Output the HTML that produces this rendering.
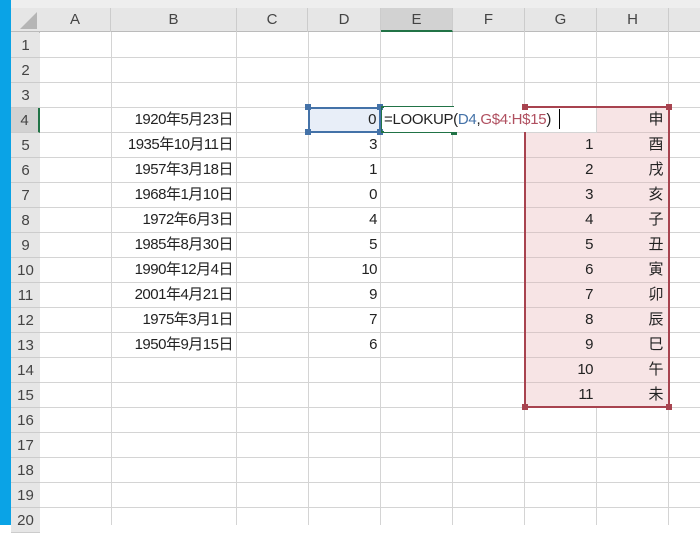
<!DOCTYPE html>
<html><head><meta charset="utf-8"><style>
*{margin:0;padding:0;box-sizing:border-box}
body{width:700px;height:525px;overflow:hidden;background:#fff;position:relative;font-family:"Liberation Sans","Noto Sans CJK JP",sans-serif;color:#222}
.a{position:absolute}
.vl{position:absolute;top:32px;bottom:0;width:1px;background:#d4d4d4}
.hl{position:absolute;left:40px;right:0;height:1px;background:#d4d4d4}
.ch{position:absolute;top:8px;height:24px;font-size:15px;color:#444;text-align:center;line-height:24px;border-right:1px solid #ccc}
.rh{position:absolute;left:11px;width:29px;height:25px;font-size:15px;color:#444;text-align:center;line-height:25px;border-bottom:1px solid #ccc;background:#e6e6e6}
.c{position:absolute;height:25px;line-height:25px;font-size:15px;text-align:right;padding-right:4px;white-space:nowrap;letter-spacing:-0.5px}
.h{position:absolute;width:6px;height:6px}
</style></head><body>
<div class="a" style="left:0;top:0;width:11px;height:525px;background:#0aa3e6"></div>
<div class="a" style="left:11px;top:0;width:689px;height:8px;background:#eeeeee"></div>
<div class="a" style="left:11px;top:8px;width:689px;height:24px;background:#e6e6e6;border-bottom:1px solid #bbb"></div>
<div class="a" style="left:11px;top:32px;width:29px;height:493px;background:#e6e6e6;border-right:1px solid #bbb"></div>
<svg class="a" style="left:18px;top:12px" width="20" height="18"><polygon points="19,0 19,17 2,17" fill="#b5b5b5"/></svg>
<div class="ch" style="left:40px;width:71px">A</div>
<div class="ch" style="left:111px;width:126px">B</div>
<div class="ch" style="left:237px;width:71px">C</div>
<div class="ch" style="left:308px;width:73px">D</div>
<div class="ch" style="left:381px;width:72px;background:#d2d2d2;border-bottom:2px solid #217346;line-height:23px">E</div>
<div class="ch" style="left:453px;width:72px">F</div>
<div class="ch" style="left:525px;width:72px">G</div>
<div class="ch" style="left:597px;width:72px">H</div>
<div class="vl" style="left:111px"></div><div class="vl" style="left:236px"></div><div class="vl" style="left:308px"></div><div class="vl" style="left:380px"></div><div class="vl" style="left:452px"></div><div class="vl" style="left:524px"></div><div class="vl" style="left:596px"></div><div class="vl" style="left:668px"></div>
<div class="hl" style="top:57px"></div><div class="hl" style="top:82px"></div><div class="hl" style="top:107px"></div><div class="hl" style="top:132px"></div><div class="hl" style="top:157px"></div><div class="hl" style="top:182px"></div><div class="hl" style="top:207px"></div><div class="hl" style="top:232px"></div><div class="hl" style="top:257px"></div><div class="hl" style="top:282px"></div><div class="hl" style="top:307px"></div><div class="hl" style="top:332px"></div><div class="hl" style="top:357px"></div><div class="hl" style="top:382px"></div><div class="hl" style="top:407px"></div><div class="hl" style="top:432px"></div><div class="hl" style="top:457px"></div><div class="hl" style="top:482px"></div><div class="hl" style="top:507px"></div>
<div class="rh" style="top:33px">1</div><div class="rh" style="top:58px">2</div><div class="rh" style="top:83px">3</div>
<div class="rh" style="top:108px;background:#d2d2d2;border-right:2px solid #217346">4</div>
<div class="rh" style="top:133px">5</div><div class="rh" style="top:158px">6</div><div class="rh" style="top:183px">7</div><div class="rh" style="top:208px">8</div><div class="rh" style="top:233px">9</div><div class="rh" style="top:258px">10</div><div class="rh" style="top:283px">11</div><div class="rh" style="top:308px">12</div><div class="rh" style="top:333px">13</div><div class="rh" style="top:358px">14</div><div class="rh" style="top:383px">15</div><div class="rh" style="top:408px">16</div><div class="rh" style="top:433px">17</div><div class="rh" style="top:458px">18</div><div class="rh" style="top:483px">19</div><div class="rh" style="top:508px">20</div>
<!-- pink range -->
<div class="a" style="left:525px;top:133px;width:72px;height:274px;background:#f7e4e5"></div>
<div class="a" style="left:597px;top:108px;width:72px;height:299px;background:#f7e4e5"></div>
<div class="hl" style="left:525px;right:31px;top:157px;background:#d9c8c9"></div>
<div class="hl" style="left:525px;right:31px;top:182px;background:#d9c8c9"></div><div class="hl" style="left:525px;right:31px;top:207px;background:#d9c8c9"></div><div class="hl" style="left:525px;right:31px;top:232px;background:#d9c8c9"></div><div class="hl" style="left:525px;right:31px;top:257px;background:#d9c8c9"></div><div class="hl" style="left:525px;right:31px;top:282px;background:#d9c8c9"></div><div class="hl" style="left:525px;right:31px;top:307px;background:#d9c8c9"></div><div class="hl" style="left:525px;right:31px;top:332px;background:#d9c8c9"></div><div class="hl" style="left:525px;right:31px;top:357px;background:#d9c8c9"></div><div class="hl" style="left:525px;right:31px;top:382px;background:#d9c8c9"></div><div class="hl" style="left:597px;right:31px;top:132px;background:#d9c8c9"></div>
<div class="a" style="left:453px;top:108px;width:143px;height:24px;background:#fff"></div>
<!-- B dates -->
<div class="c" style="left:111px;width:126px;top:107px">1920年5月23日</div>
<div class="c" style="left:111px;width:126px;top:132px">1935年10月11日</div>
<div class="c" style="left:111px;width:126px;top:157px">1957年3月18日</div>
<div class="c" style="left:111px;width:126px;top:182px">1968年1月10日</div>
<div class="c" style="left:111px;width:126px;top:207px">1972年6月3日</div>
<div class="c" style="left:111px;width:126px;top:232px">1985年8月30日</div>
<div class="c" style="left:111px;width:126px;top:257px">1990年12月4日</div>
<div class="c" style="left:111px;width:126px;top:282px">2001年4月21日</div>
<div class="c" style="left:111px;width:126px;top:307px">1975年3月1日</div>
<div class="c" style="left:111px;width:126px;top:332px">1950年9月15日</div>
<!-- D -->
<div class="a" style="left:308px;top:107px;width:73px;height:26px;background:#e8eef8;border:2px solid #4472a8"></div>
<div class="c" style="left:308px;width:73px;top:107px;padding-right:5px">0</div>
<div class="c" style="left:308px;width:73px;top:132px">3</div>
<div class="c" style="left:308px;width:73px;top:157px">1</div>
<div class="c" style="left:308px;width:73px;top:182px">0</div>
<div class="c" style="left:308px;width:73px;top:207px">4</div>
<div class="c" style="left:308px;width:73px;top:232px">5</div>
<div class="c" style="left:308px;width:73px;top:257px">10</div>
<div class="c" style="left:308px;width:73px;top:282px">9</div>
<div class="c" style="left:308px;width:73px;top:307px">7</div>
<div class="c" style="left:308px;width:73px;top:332px">6</div>
<div class="h" style="left:305px;top:104px;background:#4472a8"></div><div class="h" style="left:377px;top:104px;background:#4472a8"></div><div class="h" style="left:305px;top:129px;background:#4472a8"></div><div class="h" style="left:377px;top:129px;background:#4472a8"></div>
<!-- E -->
<div class="a" style="left:381px;top:106px;width:73px;height:27px;border:2px solid #217346;border-left-width:1px"></div>
<div class="h" style="left:451px;top:129px;background:#217346"></div>
<div class="a" style="left:384px;top:107px;height:25px;line-height:25px;font-size:15px;white-space:nowrap;letter-spacing:-0.3px;background:#fff">=LOOKUP(<span style="color:#4472a8">D4</span>,<span style="color:#b05060">G$4:H$15</span>)</div>
<div class="a" style="left:559px;top:109px;width:1px;height:20px;background:#000"></div>
<!-- red border -->
<div class="a" style="left:524px;top:106px;width:146px;height:302px;border:2px solid #a8434f;border-top:none;border-left:none"></div>
<div class="a" style="left:524px;top:106px;width:146px;height:2px;background:#a8434f"></div>
<div class="a" style="left:524px;top:132px;width:2px;height:276px;background:#a8434f"></div>
<div class="h" style="left:522px;top:104px;background:#a8434f"></div><div class="h" style="left:666px;top:104px;background:#a8434f"></div><div class="h" style="left:522px;top:404px;background:#a8434f"></div><div class="h" style="left:666px;top:404px;background:#a8434f"></div>
<div class="c" style="left:525px;width:72px;top:132px">1</div>
<div class="c" style="left:525px;width:72px;top:157px">2</div>
<div class="c" style="left:525px;width:72px;top:182px">3</div>
<div class="c" style="left:525px;width:72px;top:207px">4</div>
<div class="c" style="left:525px;width:72px;top:232px">5</div>
<div class="c" style="left:525px;width:72px;top:257px">6</div>
<div class="c" style="left:525px;width:72px;top:282px">7</div>
<div class="c" style="left:525px;width:72px;top:307px">8</div>
<div class="c" style="left:525px;width:72px;top:332px">9</div>
<div class="c" style="left:525px;width:72px;top:357px">10</div>
<div class="c" style="left:525px;width:72px;top:382px">11</div>
<div class="c" style="left:597px;width:72px;top:107px;padding-right:6px">申</div>
<div class="c" style="left:597px;width:72px;top:132px;padding-right:6px">酉</div>
<div class="c" style="left:597px;width:72px;top:157px;padding-right:6px">戌</div>
<div class="c" style="left:597px;width:72px;top:182px;padding-right:6px">亥</div>
<div class="c" style="left:597px;width:72px;top:207px;padding-right:6px">子</div>
<div class="c" style="left:597px;width:72px;top:232px;padding-right:6px">丑</div>
<div class="c" style="left:597px;width:72px;top:257px;padding-right:6px">寅</div>
<div class="c" style="left:597px;width:72px;top:282px;padding-right:6px">卯</div>
<div class="c" style="left:597px;width:72px;top:307px;padding-right:6px">辰</div>
<div class="c" style="left:597px;width:72px;top:332px;padding-right:6px">巳</div>
<div class="c" style="left:597px;width:72px;top:357px;padding-right:6px">午</div>
<div class="c" style="left:597px;width:72px;top:382px;padding-right:6px">未</div>
</body></html>
